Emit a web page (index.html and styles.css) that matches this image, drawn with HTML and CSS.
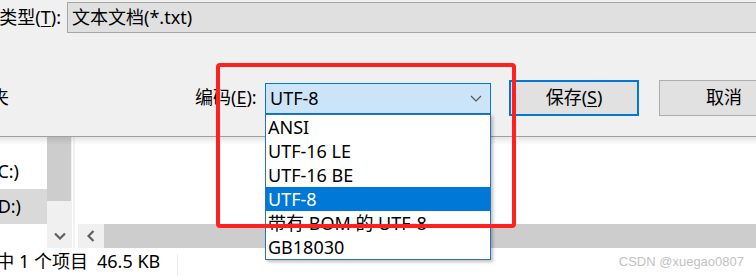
FILE: index.html
```html
<!DOCTYPE html>
<html lang="zh-CN">
<head>
<meta charset="utf-8">
<title>保存</title>
<link rel="stylesheet" href="styles.css">
</head>
<body>
<div class="window">
  <div class="top">
    <div class="type-row">
      <div class="clip-end type-label"><span>保存类型(<u>T</u>):</span></div>
      <div class="type-field">文本文档(*.txt)</div>
    </div>
    <div class="action-row">
      <div class="folder"><div class="clip-end folder-text"><span>隐藏文件夹</span></div></div>
      <div class="enc-label">编码(<u>E</u>):</div>
      <div class="select">
        <span class="select-value">UTF-8</span>
        <svg class="select-chevron" width="12" height="7" viewBox="0 0 12 7"><polyline points="1,1 6,6 11,1" fill="none" stroke="#505050" stroke-width="1.1"/></svg>
        <ul class="dropdown">
          <li>ANSI</li>
          <li>UTF-16 LE</li>
          <li>UTF-16 BE</li>
          <li class="active">UTF-8</li>
          <li>带有 BOM 的 UTF-8</li>
          <li>GB18030</li>
        </ul>
      </div>
      <button class="btn btn-save">保存(<u>S</u>)</button>
      <button class="btn btn-cancel">取消</button>
    </div>
  </div>
  <div class="browser">
    <div class="nav">
      <div class="nav-item"><div class="clip-end nav-c"><span>本地磁盘 (C:)</span></div></div>
      <div class="nav-item selected"><div class="clip-end nav-d"><span>新加卷 (D:)</span></div></div>
    </div>
    <div class="vscroll">
      <div class="vthumb"></div>
      <div class="fill"></div>
      <div class="varrow"><svg width="12" height="8" viewBox="0 0 12 8"><polyline points="1,1.5 6,6.5 11,1.5" fill="none" stroke="#606060" stroke-width="2.2"/></svg></div>
    </div>
    <div class="gutter"><div class="gutter-line"></div></div>
    <div class="main">
      <div class="fill"></div>
      <div class="hscroll">
        <div class="harrow"><svg width="8" height="12" viewBox="0 0 8 12"><polyline points="6.5,1 1.5,6 6.5,11" fill="none" stroke="#606060" stroke-width="2.2"/></svg></div>
        <div class="hthumb"></div>
      </div>
    </div>
  </div>
  <div class="status">
    <div class="status-info">
      <div class="clip-end status-count"><span>选中 1 个项目</span></div>
      <span class="status-size">46.5 KB</span>
    </div>
    <div class="status-rest"><span class="watermark">CSDN @xuegao0807</span></div>
  </div>
  <div class="annotation"></div>
</div>
</body>
</html>
```
FILE: styles.css
```css
* { box-sizing: border-box; }
html, body { margin: 0; padding: 0; }
body {
  width: 756px;
  height: 276px;
  overflow: hidden;
  background: #f0f0f0;
  font-family: "Noto Sans", "Noto Sans CJK SC", sans-serif;
  font-size: 18px;
  color: #000;
  line-height: 1.2;
}
u { text-underline-offset: 2px; text-decoration-thickness: 1px; }
.window { position: relative; width: 756px; height: 276px; overflow: hidden; }

.clip-end { display: flex; justify-content: flex-end; white-space: nowrap; flex: none; }

.top {
  height: 137px;
  border-bottom: 1px solid #a0a0a0;
  background: #f0f0f0;
  padding-top: 2px;
}
.type-row { display: flex; height: 31px; }
.type-label { width: 61px; align-items: center; }
.type-field {
  margin-left: 6px;
  margin-right: -10px;
  flex: 1;
  background: #e0e0e0;
  border: 1px solid #a6a6a6;
  padding-left: 4px;
  display: flex;
  align-items: center;
}

.action-row { display: flex; align-items: flex-start; height: 36px; margin-top: 47px; }
.action-row > * { flex: none; }
.folder { width: 195px; height: 36px; display: flex; align-items: center; }
.folder-text { width: 9px; }
.enc-label { width: 70px; height: 36px; display: flex; align-items: center; white-space: nowrap; }

.select {
  position: relative;
  width: 226px;
  height: 31px;
  margin-top: 3px;
  background: #cce4f7;
  border: 1px solid #0078d7;
  display: flex;
  align-items: center;
  justify-content: space-between;
  padding: 0 8px 0 4px;
}
.dropdown {
  position: absolute;
  left: -1px;
  top: calc(100% + 1px);
  width: 226px;
  margin: 0;
  padding: 0;
  list-style: none;
  background: #fff;
  border: 1px solid #2f6fb8;
  box-shadow: 2px 2px 3px rgba(0, 0, 0, 0.25);
  z-index: 5;
}
.dropdown li { height: 24px; line-height: 24px; padding-left: 2px; white-space: nowrap; }
.dropdown li.active { background: #0078d7; color: #fff; }

.btn {
  height: 36px;
  padding: 0;
  font: inherit;
  color: #000;
  background: #e1e1e1;
  border: 1px solid #adadad;
}
.btn-save { width: 130px; margin-left: 18px; border: 2px solid #0078d7; }
.btn-cancel { width: 130px; margin-left: 20px; }

.browser { position: relative; display: flex; height: 111px; background: #fff; }
.browser > * { flex: none; }
.browser::before {
  content: "";
  position: absolute;
  left: 0; right: 0; top: 0;
  height: 8px;
  background: linear-gradient(rgba(0, 0, 0, 0.1), rgba(0, 0, 0, 0));
  pointer-events: none;
  z-index: 2;
}
.nav { width: 47px; padding-top: 17px; }
.nav-item { height: 35px; display: flex; align-items: center; }
.nav-item.selected { background: #d9d9d9; }
.nav-c { width: 19px; }
.nav-d { width: 21px; }

.vscroll { width: 25px; background: #f0f0f0; display: flex; flex-direction: column; }
.vthumb { height: 64px; background: #cdcdcd; margin-right: 1px; }
.fill { flex: 1; }
.varrow { height: 24px; display: flex; align-items: center; justify-content: center; }

.gutter { width: 6px; display: flex; padding-left: 1px; }
.gutter-line { width: 2px; background: #f2f2f2; }

.browser > .main { flex: 1; display: flex; flex-direction: column; }
.hscroll { height: 24px; display: flex; }
.harrow { width: 26px; background: #f0f0f0; display: flex; align-items: center; justify-content: center; }
.hthumb { flex: 1; background: #cdcdcd; }

.status { height: 28px; background: #fff; display: flex; }
.status-info { width: 177px; flex: none; display: flex; align-items: center; }
.status-count { width: 88px; }
.status-size { margin-left: 9px; white-space: nowrap; }
.status-rest {
  flex: 1;
  margin-top: 6px;
  border-left: 1px solid #ebebeb;
  display: flex;
  align-items: center;
  justify-content: flex-end;
  padding-right: 12px;
  padding-bottom: 6px;
}
.watermark { font-family: "Liberation Sans", sans-serif; font-size: 13px; color: #c2c2c2; white-space: nowrap; }

.annotation {
  position: absolute;
  left: 216px;
  top: 63px;
  width: 300px;
  height: 165px;
  border: 4px solid #ff2020;
  border-radius: 4px;
  z-index: 10;
  pointer-events: none;
}
```
